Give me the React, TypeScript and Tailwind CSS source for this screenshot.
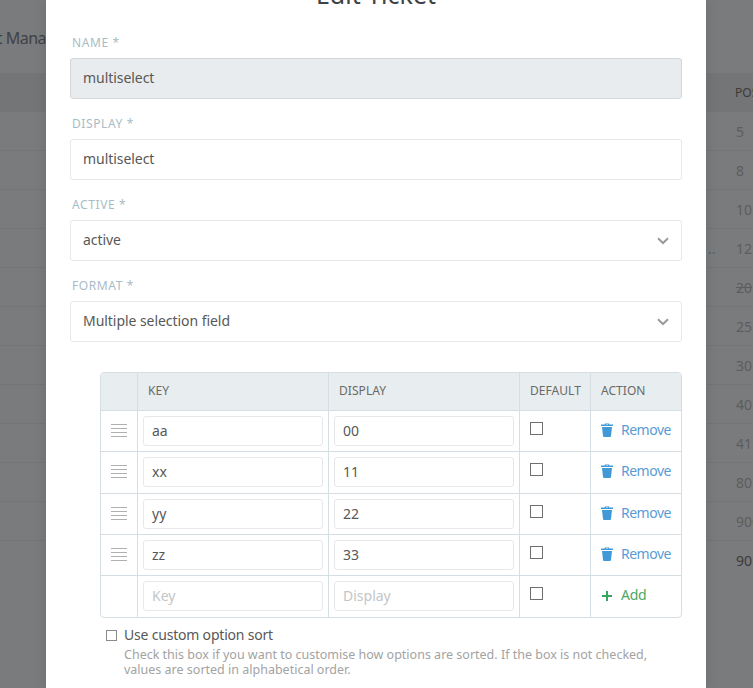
const bgRows = ['5', '8', '10', '12', '20', '25', '30', '40', '41', '80', '900', '901'];
const options = [
  { key: 'aa', display: '00', h: 'h-[41px]' },
  { key: 'xx', display: '11', h: 'h-[42px]' },
  { key: 'yy', display: '22', h: 'h-[41px]' },
  { key: 'zz', display: '33', h: 'h-[41px]' },
];

const TrashIcon = () => (
  <svg width="12" height="14" viewBox="0 0 12 14" className="shrink-0">
    <path d="M3.8 1.4 L3.8 0.4 L8.2 0.4 L8.2 1.4 L12 1.4 L12 3 L0 3 L0 1.4 Z M5 1.4 L7 1.4 L7 1.1 L5 1.1 Z" fill="#4299d8" fillRule="evenodd" />
    <path d="M1 4 L11 4 L10 13 Q9.9 14 9 14 L3 14 Q2.1 14 2 13 Z" fill="#4299d8" />
  </svg>
);

const Chevron = () => (
  <svg width="12" height="8" viewBox="0 0 12 8" className="absolute right-[12px] top-[16px]">
    <path d="M1 1.2 L6 6 L11 1.2" fill="none" stroke="#9a9a9a" strokeWidth="2" />
  </svg>
);

const Handle = () => (
  <div className="flex flex-col gap-[3px] w-[16px] mx-auto">
    <div className="h-px bg-[#b0b0b0]" />
    <div className="h-px bg-[#b0b0b0]" />
    <div className="h-px bg-[#b0b0b0]" />
    <div className="h-px bg-[#b0b0b0]" />
  </div>
);

const Box = () => <div className="w-[13px] h-[13px] border border-[#6f6f6f] bg-white" />;

const Field = ({ label, value, disabled, select }: { label: string; value: string; disabled?: boolean; select?: boolean }) => (
  <div>
    <div className="pl-[2px] h-[16px] leading-[16px] text-[12px] tracking-[0.6px] text-[#a9bcc6] uppercase">{label} *</div>
    <div className={`relative mt-[7px] h-[41px] rounded-[3px] border px-[12px] leading-[38px] text-[14px] tracking-[-0.05px] text-[#585856] ${disabled ? 'bg-[#e9ecef] border-[#d4d7d9]' : 'bg-white border-[#e6e8ea]'}`}>
      {value}
      {select && <Chevron />}
    </div>
  </div>
);

const CellInput = ({ value, placeholder }: { value?: string; placeholder?: string }) => (
  <div className={`h-[30px] rounded-[3px] border border-[#e6e8ea] bg-white pl-[8px] leading-[27px] text-[14px] ${value ? 'text-[#585856]' : 'text-[#c4c6c8]'}`}>
    {value || placeholder}
  </div>
);

const HeadCell = ({ w, children }: { w: string; children?: string }) => (
  <div className={`${w} shrink-0 border-r border-[#d4dee3] last:border-r-0 pl-[10px] text-[12px] tracking-[0.05px] text-[#6a6a66] leading-[36px] uppercase`}>{children}</div>
);

export default function App() {
  return (
    <div className="relative h-[688px] w-[753px] overflow-hidden bg-[#7a7b7c]" style={{ fontFamily: '"Noto Sans", sans-serif' }}>
      {/* page behind the dialog */}
      <div className="h-[73px] pt-[26px] w-[46px] overflow-hidden">
        <div className="flex justify-end whitespace-nowrap text-[16px] tracking-[-0.5px] leading-[24px] text-[#3f4245]">
          <span>t Mana</span>
        </div>
      </div>
      <div className="h-[39px] bg-[#747576] pl-[735px] text-[12px] leading-[39px] text-[#3b3b38] whitespace-nowrap overflow-hidden">POS</div>
      {bgRows.map((n, i) => (
        <div
          key={n}
          className={`h-[39px] pl-[736px] text-[14px] leading-[39px] whitespace-nowrap overflow-hidden ${i < 11 ? 'border-b border-[#747576] text-[#5c5d5e]' : 'text-[#3a3a3a]'} ${n === '20' ? 'line-through' : ''}`}
        >
          {n}
        </div>
      ))}
      <div className="absolute left-[708px] top-[240px] text-[14px] leading-[18px] text-[#5c5d5e]">..</div>

      {/* dialog */}
      <div className="absolute left-[46px] top-0 h-[688px] w-[660px] bg-white shadow-[0_0_14px_rgba(40,70,90,0.18)]">
        <div className="h-[54px] -mt-[19px] text-center text-[25px] leading-[26px] text-[#3f4245]">Edit Ticket</div>
        <div className="pl-[24px] pr-[24px] flex flex-col gap-[17px]">
          <Field label="Name" value="multiselect" disabled />
          <Field label="Display" value="multiselect" />
          <Field label="Active" value="active" select />
          <Field label="Format" value="Multiple selection field" select />
        </div>

        <div className="ml-[54px] mt-[30px] w-[582px] h-[246px] rounded-[4px] border border-[#d4dee3] overflow-hidden">
          <div className="flex h-[38px] bg-[#e8edf0] border-b border-[#d4dee3]">
            <HeadCell w="w-[37px]" />
            <HeadCell w="w-[191px]">Key</HeadCell>
            <HeadCell w="w-[191px]">Display</HeadCell>
            <HeadCell w="w-[71px]">Default</HeadCell>
            <HeadCell w="w-[90px]">Action</HeadCell>
          </div>
          {options.map((o) => (
            <div key={o.key} className={`flex ${o.h} border-b border-[#d4dee3]`}>
              <div className="w-[37px] border-r border-[#d4dee3] pt-[13px]"><Handle /></div>
              <div className="w-[191px] border-r border-[#d4dee3] pl-[5px] pr-[5px] pt-[5px]"><CellInput value={o.key} /></div>
              <div className="w-[191px] border-r border-[#d4dee3] pl-[5px] pr-[5px] pt-[5px]"><CellInput value={o.display} /></div>
              <div className="w-[71px] border-r border-[#d4dee3] pl-[10px] pt-[11px]"><Box /></div>
              <div className="flex-1 flex items-start gap-[8px] pl-[10px] pt-[10px] text-[14px] tracking-[-0.5px] leading-[18px] text-[#5b9bd5]">
                <div className="pt-[2px]"><TrashIcon /></div>
                <span>Remove</span>
              </div>
            </div>
          ))}
          <div className="flex h-[41px]">
            <div className="w-[37px] border-r border-[#d4dee3]" />
            <div className="w-[191px] border-r border-[#d4dee3] pl-[5px] pr-[5px] pt-[5px]"><CellInput placeholder="Key" /></div>
            <div className="w-[191px] border-r border-[#d4dee3] pl-[5px] pr-[5px] pt-[5px]"><CellInput placeholder="Display" /></div>
            <div className="w-[71px] border-r border-[#d4dee3] pl-[10px] pt-[11px]"><Box /></div>
            <div className="flex-1 flex items-start gap-[8px] pl-[10px] pt-[10px] text-[14px] leading-[18px] tracking-[-0.3px] text-[#4ca868]">
              <svg width="12" height="12" viewBox="0 0 12 12" className="mt-[4px] shrink-0">
                <path d="M6 1 V11 M1 6 H11" stroke="#35a562" strokeWidth="2" fill="none" />
              </svg>
              <span>Add</span>
            </div>
          </div>
        </div>

        <div className="ml-[60px] mt-[10px] flex items-start gap-[7px]">
          <div className="mt-[2px] w-[11px] h-[11px] border border-[#8a8a8a] bg-white shrink-0" />
          <div>
            <div className="text-[14px] leading-[14px] tracking-[-0.2px] text-[#585856]">Use custom option sort</div>
            <div className="mt-[5px] w-[540px] text-[12.5px] leading-[15px] text-[#a3a3a3]">
              Check this box if you want to customise how options are sorted. If the box is not checked, values are sorted in alphabetical order.
            </div>
          </div>
        </div>
      </div>
    </div>
  );
}
